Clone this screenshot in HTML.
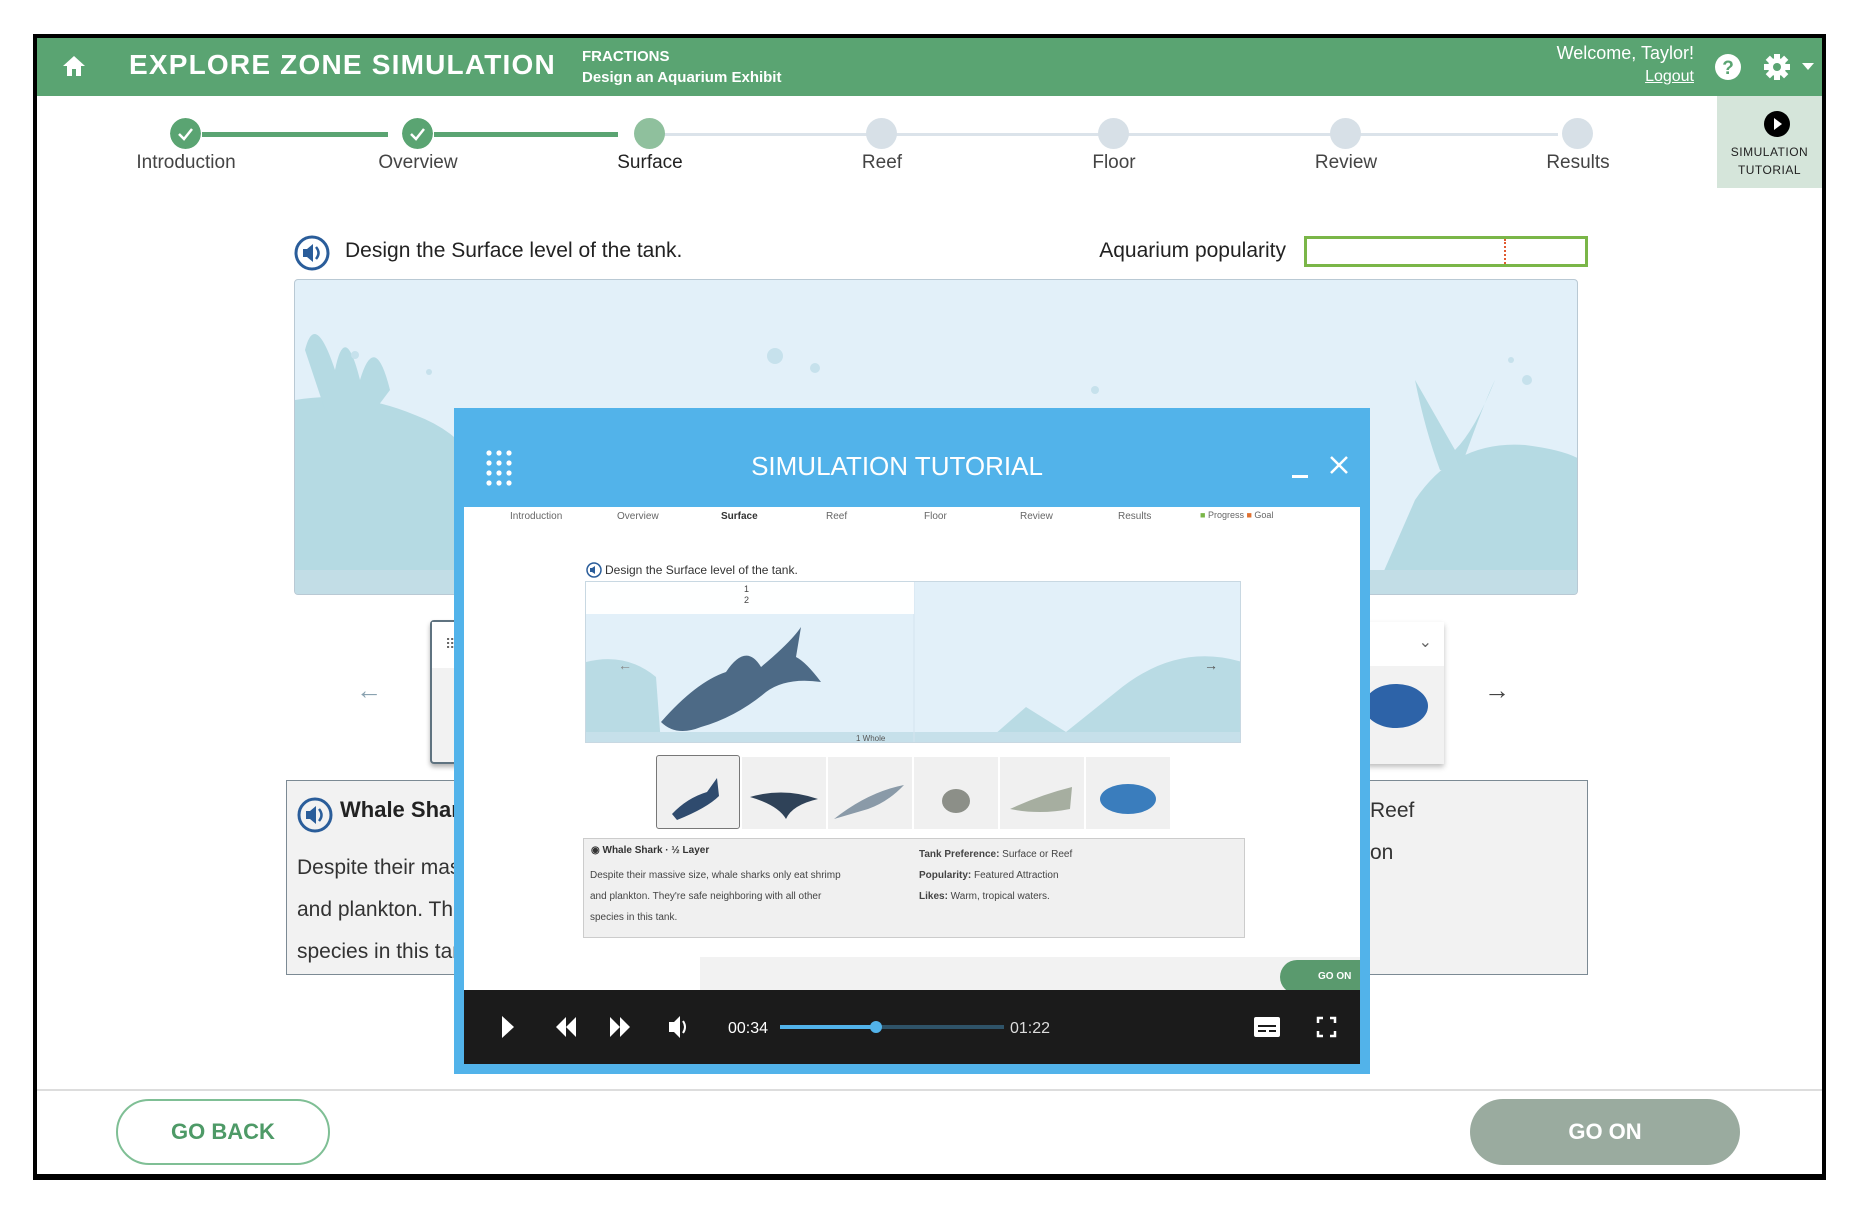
<!DOCTYPE html>
<html><head><meta charset="utf-8">
<style>
*{margin:0;padding:0;box-sizing:border-box}
body{width:1872px;height:1210px;background:#fff;position:relative;overflow:hidden;font-family:"Liberation Sans",sans-serif;color:#333}
.a{position:absolute}
.frame{left:33px;top:34px;width:1793px;height:1146px;border:4px solid #000;border-bottom-width:6px;background:#fff}
.hdr{left:37px;top:38px;width:1785px;height:58px;background:#5aa472}
.w{color:#fff}
.step{width:31px;height:31px;border-radius:50%;top:118px}
.lbl{top:152px;font-size:19px;color:#444;text-align:center;width:160px}
.line{height:5px;top:132px}
.mini{font-size:10px;color:#666}
</style></head><body>
<div class="a frame"></div>
<div class="a hdr"></div>
<svg class="a" style="left:62px;top:55px" width="24" height="22" viewBox="0 0 24 22"><path d="M12 1 L23 11 H19 V21 H14 V14 H10 V21 H5 V11 H1 Z" fill="#fff"/></svg>
<div class="a w" style="left:129px;top:49px;font-size:28px;font-weight:bold;letter-spacing:1.2px">EXPLORE ZONE SIMULATION</div>
<div class="a w" style="left:582px;top:48px;font-size:15px;font-weight:bold">FRACTIONS</div>
<div class="a w" style="left:582px;top:69px;font-size:15px;font-weight:bold">Design an Aquarium Exhibit</div>
<div class="a w" style="right:178px;top:43px;font-size:18px">Welcome, Taylor!</div>
<div class="a w" style="right:178px;top:68px;font-size:16px;text-decoration:underline">Logout</div>
<svg class="a" style="left:1714px;top:53px" width="28" height="28"><circle cx="14" cy="14" r="13" fill="#fff"/><text x="14" y="21" font-size="19" font-weight="bold" text-anchor="middle" fill="#5aa472" font-family="Liberation Sans">?</text></svg>
<svg class="a" style="left:1762px;top:52px" width="30" height="30" viewBox="0 0 30 30"><g fill="#fff"><circle cx="15" cy="15" r="9"/><rect x="12" y="2" width="6" height="26"/><rect x="2" y="12" width="26" height="6"/><rect x="12" y="2" width="6" height="26" transform="rotate(45 15 15)"/><rect x="12" y="2" width="6" height="26" transform="rotate(-45 15 15)"/></g><circle cx="15" cy="15" r="4" fill="#5aa472"/></svg>
<svg class="a" style="left:1801px;top:62px" width="14" height="10"><path d="M1 1 H13 L7 8 Z" fill="#fff"/></svg>

<div class="a line" style="left:202px;width:186px;background:#5aa472"></div>
<div class="a line" style="left:434px;width:184px;background:#5aa472"></div>
<div class="a line" style="left:664px;top:133px;height:3px;width:894px;background:#dbe3ea"></div>
<svg class="a step" style="left:170px" width="31" height="31"><circle cx="15.5" cy="15.5" r="15.5" fill="#5aa472"/><path d="M9 16 L14 21 L22 11" stroke="#fff" stroke-width="2.5" fill="none"/></svg>
<svg class="a step" style="left:402px" width="31" height="31"><circle cx="15.5" cy="15.5" r="15.5" fill="#5aa472"/><path d="M9 16 L14 21 L22 11" stroke="#fff" stroke-width="2.5" fill="none"/></svg>
<div class="a step" style="left:634px;background:#8fc09d"></div>
<div class="a step" style="left:866px;background:#d7e0e7"></div>
<div class="a step" style="left:1098px;background:#d7e0e7"></div>
<div class="a step" style="left:1330px;background:#d7e0e7"></div>
<div class="a step" style="left:1562px;background:#d7e0e7"></div>
<div class="a lbl" style="left:106px">Introduction</div>
<div class="a lbl" style="left:338px">Overview</div>
<div class="a lbl" style="left:570px;color:#222">Surface</div>
<div class="a lbl" style="left:802px">Reef</div>
<div class="a lbl" style="left:1034px">Floor</div>
<div class="a lbl" style="left:1266px">Review</div>
<div class="a lbl" style="left:1498px">Results</div>
<div class="a" style="left:1717px;top:96px;width:105px;height:92px;background:#d5e5da"></div>
<svg class="a" style="left:1763px;top:110px" width="28" height="28"><circle cx="14" cy="14" r="13" fill="#000"/><path d="M11 8 L19 14 L11 20 Z" fill="#fff"/></svg>
<div class="a" style="left:1717px;top:143px;width:105px;text-align:center;font-size:12px;line-height:18px;color:#222;letter-spacing:.5px">SIMULATION<br>TUTORIAL</div>

<svg class="a" style="left:294px;top:235px" width="36" height="36"><circle cx="18" cy="18" r="16" fill="none" stroke="#2a5d9a" stroke-width="3"/><path d="M9 14 H13 L19 9 V27 L13 22 H9 Z" fill="#2a5d9a"/><path d="M22 12 Q27 18 22 24" stroke="#2a5d9a" stroke-width="2.5" fill="none"/></svg>
<div class="a" style="left:345px;top:239px;font-size:21px;color:#222">Design the Surface level of the tank.</div>
<div class="a" style="right:586px;top:239px;font-size:21px;color:#222">Aquarium popularity</div>
<div class="a" style="left:1304px;top:236px;width:284px;height:31px;border:3px solid #7ab648"></div>
<div class="a" style="left:1504px;top:239px;height:25px;border-left:2px dotted #e05a30"></div>

<div class="a" style="left:294px;top:279px;width:1284px;height:316px;border:1px solid #b9c9d4;border-radius:4px;background:#e2f0f9;overflow:hidden">
<svg width="1284" height="316" viewBox="0 0 1284 316"><g fill="#b5dae3">
<path d="M0 120 Q60 110 120 135 Q160 150 180 180 L185 316 H0 Z"/>
<path d="M1085 300 L1120 220 Q1160 160 1230 165 Q1270 170 1286 180 V316 H1085 Z"/>
<path d="M10 70 Q20 30 40 90 Q50 40 65 100 Q80 50 95 110 L80 130 L30 130 Z"/>
<path d="M1120 100 Q1130 150 1145 190 L1165 190 Q1190 120 1200 100 Q1180 150 1160 170 Z"/>
</g><g fill="#c6e1ec"><circle cx="60" cy="75" r="4"/><circle cx="480" cy="76" r="8"/><circle cx="520" cy="88" r="5"/><circle cx="1216" cy="80" r="3"/><circle cx="1232" cy="100" r="5"/><circle cx="134" cy="92" r="3"/><circle cx="800" cy="110" r="4"/></g>
<rect y="290" width="1284" height="26" fill="#c2dde6"/></svg></div>

<div class="a" style="left:356px;top:675px;font-size:26px;color:#8aa2b0">←</div>
<div class="a" style="left:1484px;top:675px;font-size:26px;color:#444">→</div>
<div class="a" style="left:430px;top:620px;width:40px;height:144px;border:2px solid #5f7380;border-radius:4px;background:#f2f2f2;box-shadow:0 3px 5px rgba(0,0,0,.3)"><div style="height:46px;background:#fff;padding:14px 0 0 13px;font-size:14px;color:#666">⠿</div></div>
<div class="a" style="left:1366px;top:622px;width:78px;height:142px;background:#f2f2f2;box-shadow:0 3px 5px rgba(0,0,0,.25)"><div style="height:44px;background:#fff;text-align:right;padding:10px 12px;color:#666">⌄</div>
<svg width="78" height="98"><ellipse cx="30" cy="40" rx="32" ry="22" fill="#2d63a8"/></svg></div>
<div class="a" style="left:286px;top:780px;width:1302px;height:195px;background:#f2f2f2;border:1px solid #7c8a94"></div>
<svg class="a" style="left:297px;top:797px" width="36" height="36"><circle cx="18" cy="18" r="16" fill="none" stroke="#2a5d9a" stroke-width="3"/><path d="M9 14 H13 L19 9 V27 L13 22 H9 Z" fill="#2a5d9a"/><path d="M22 12 Q27 18 22 24" stroke="#2a5d9a" stroke-width="2.5" fill="none"/></svg>
<div class="a" style="left:340px;top:797px;font-size:22px;font-weight:bold;color:#222">Whale Shark</div>
<div class="a" style="left:297px;top:847px;font-size:21px;line-height:42px;color:#333">Despite their massive size<br>and plankton. They're safe<br>species in this tank.</div>
<div class="a" style="left:1370px;top:790px;font-size:21px;line-height:42px;color:#333">Reef<br>on</div>

<div class="a" style="left:37px;top:1089px;width:1785px;height:2px;background:#ddd"></div>
<div class="a" style="left:116px;top:1099px;width:214px;height:66px;border:2px solid #7fbf95;border-radius:33px;text-align:center;line-height:62px;font-size:22px;font-weight:bold;color:#4e9a67">GO BACK</div>
<div class="a" style="left:1470px;top:1099px;width:270px;height:66px;border-radius:33px;background:#9aab9f;text-align:center;line-height:66px;font-size:22px;font-weight:bold;color:#fff">GO ON</div>

<div class="a" style="left:454px;top:408px;width:916px;height:666px;background:#52b3ea"></div>
<svg class="a" style="left:486px;top:450px" width="26" height="36"><g fill="#fff"><circle cx="3" cy="3" r="2.6"/><circle cx="13" cy="3" r="2.6"/><circle cx="23" cy="3" r="2.6"/><circle cx="3" cy="13" r="2.6"/><circle cx="13" cy="13" r="2.6"/><circle cx="23" cy="13" r="2.6"/><circle cx="3" cy="23" r="2.6"/><circle cx="13" cy="23" r="2.6"/><circle cx="23" cy="23" r="2.6"/><circle cx="3" cy="33" r="2.6"/><circle cx="13" cy="33" r="2.6"/><circle cx="23" cy="33" r="2.6"/></g></svg>
<div class="a w" style="left:454px;top:451px;width:886px;text-align:center;font-size:26px">SIMULATION TUTORIAL</div>
<div class="a" style="left:1292px;top:475px;width:16px;height:3px;background:#fff"></div>
<svg class="a" style="left:1329px;top:455px" width="20" height="20"><path d="M2 2 L18 18 M18 2 L2 18" stroke="#fff" stroke-width="2.5"/></svg>

<div class="a" style="left:464px;top:507px;width:896px;height:557px;background:#fff;overflow:hidden">
 <div class="a mini" style="left:46px;top:4px">Introduction</div>
 <div class="a mini" style="left:153px;top:4px">Overview</div>
 <div class="a mini" style="left:257px;top:4px;color:#333;font-weight:bold">Surface</div>
 <div class="a mini" style="left:362px;top:4px">Reef</div>
 <div class="a mini" style="left:460px;top:4px">Floor</div>
 <div class="a mini" style="left:556px;top:4px">Review</div>
 <div class="a mini" style="left:654px;top:4px">Results</div>
 <div class="a mini" style="left:736px;top:3px;font-size:9px"><span style="color:#7ab648">■</span> Progress <span style="color:#e07030">■</span> Goal</div>
 <svg class="a" style="left:122px;top:55px" width="16" height="16"><circle cx="8" cy="8" r="7" fill="none" stroke="#2a5d9a" stroke-width="1.5"/><path d="M4 6 H6 L9 4 V12 L6 10 H4 Z" fill="#2a5d9a"/></svg>
 <div class="a" style="left:141px;top:56px;font-size:12px;color:#333">Design the Surface level of the tank.</div>
 <div class="a" style="left:121px;top:74px;width:656px;height:162px;background:#e2f0f9;border:1px solid #c8d8e2;overflow:hidden">
  <svg width="656" height="162"><g fill="#b9dbe4"><path d="M0 80 Q40 70 70 95 L75 162 H0 Z"/><path d="M400 160 L440 125 L480 150 L530 110 Q590 60 656 80 V162 Z"/></g>
  <rect y="150" width="656" height="12" fill="#c6e0ea"/>
  <path d="M75 140 Q110 100 140 90 Q160 60 175 85 Q205 60 215 45 L210 75 Q220 80 235 100 Q200 95 180 110 Q150 135 115 145 Q90 155 75 140 Z" fill="#4d6a86"/>
  <line x1="328" y1="0" x2="328" y2="162" stroke="#d4e4ee"/></svg>
  <div class="a" style="left:0;top:0;width:328px;height:32px;background:#fff;opacity:.95"></div>
  <div class="a" style="left:158px;top:2px;font-size:9px;line-height:11px;text-align:center;color:#444">1<br>2</div>
  <div class="a" style="left:270px;top:152px;font-size:8px;color:#555">1 Whole</div>
 </div>
 <div class="a" style="left:154px;top:150px;font-size:14px;color:#888">←</div>
 <div class="a" style="left:740px;top:150px;font-size:14px;color:#555">→</div>
 <div class="a" style="left:192px;top:248px;width:84px;height:74px;border:1.5px solid #777;border-radius:3px;background:#f0f0f0"><svg width="84" height="70"><path d="M15 58 Q30 42 50 36 L60 22 L62 40 Q50 52 20 64 Z" fill="#2f4b6e"/></svg></div>
 <div class="a" style="left:278px;top:250px;width:84px;height:72px;background:#f0f0f0"><svg width="84" height="70"><path d="M8 40 Q42 30 76 42 Q50 48 44 62 Q36 48 8 40 Z" fill="#2f4258"/></svg></div>
 <div class="a" style="left:364px;top:250px;width:84px;height:72px;background:#f0f0f0"><svg width="84" height="70"><path d="M6 62 Q40 35 76 28 Q60 45 40 52 Z" fill="#8a9aa8"/></svg></div>
 <div class="a" style="left:450px;top:250px;width:84px;height:72px;background:#f0f0f0"><svg width="84" height="70"><ellipse cx="42" cy="44" rx="14" ry="12" fill="#8c8f88"/></svg></div>
 <div class="a" style="left:536px;top:250px;width:84px;height:72px;background:#f0f0f0"><svg width="84" height="70"><path d="M10 52 Q40 38 72 30 L70 52 Q40 58 10 52 Z" fill="#a6aea0"/></svg></div>
 <div class="a" style="left:622px;top:250px;width:84px;height:72px;background:#f0f0f0"><svg width="84" height="70"><ellipse cx="42" cy="42" rx="28" ry="15" fill="#3a7dbd"/></svg></div>
 <div class="a" style="left:119px;top:331px;width:662px;height:100px;background:#f0f0f0;border:1px solid #ccc"></div>
 <div class="a" style="left:127px;top:338px;font-size:10px;font-weight:bold;color:#333">◉ Whale Shark · ½ Layer</div>
 <div class="a" style="left:126px;top:358px;font-size:10px;line-height:21px;color:#444">Despite their massive size, whale sharks only eat shrimp<br>and plankton. They're safe neighboring with all other<br>species in this tank.</div>
 <div class="a" style="left:455px;top:337px;font-size:10px;line-height:21px;color:#444"><b>Tank Preference:</b> Surface or Reef<br><b>Popularity:</b> Featured Attraction<br><b>Likes:</b> Warm, tropical waters.</div>
 <div class="a" style="left:236px;top:450px;width:664px;height:40px;background:#f2f2f2"></div>
 <div class="a" style="left:816px;top:453px;width:100px;height:34px;border-radius:17px;background:#5a9a6e;color:#fff;font-size:10px;font-weight:bold;line-height:34px;padding-left:38px">GO ON</div>
 <div class="a" style="left:0;top:483px;width:896px;height:74px;background:#1b1b1b"></div>
 <svg class="a" style="left:0;top:483px" width="896" height="74">
  <path d="M38 26 L50 37 L38 48 Z" fill="#fff"/>
  <path d="M102 27 L92 37 L102 47 Z M112 27 L102 37 L112 47 Z" fill="#fff"/>
  <path d="M146 27 L156 37 L146 47 Z M156 27 L166 37 L156 47 Z" fill="#fff"/>
  <path d="M205 32 H210 L216 26 V48 L210 42 H205 Z" fill="#fff"/><path d="M219 31 Q223 37 219 43" stroke="#fff" stroke-width="2" fill="none"/>
  <text x="264" y="43" fill="#fff" font-size="16" font-family="Liberation Sans">00:34</text>
  <rect x="316" y="35" width="224" height="4" fill="#2f5368"/><rect x="316" y="35" width="96" height="4" fill="#52b3ea"/><circle cx="412" cy="37" r="6" fill="#52b3ea"/>
  <text x="546" y="43" fill="#ddd" font-size="16" font-family="Liberation Sans">01:22</text>
  <rect x="790" y="27" width="26" height="20" rx="2" fill="#fff"/><path d="M794 36 H812 M794 41 H802 M805 41 H812" stroke="#1b1b1b" stroke-width="2"/>
  <path d="M854 33 V28 H859 M866 28 H871 V33 M871 41 V46 H866 M859 46 H854 V41" stroke="#fff" stroke-width="2.5" fill="none"/>
 </svg>
</div>
</body></html>
